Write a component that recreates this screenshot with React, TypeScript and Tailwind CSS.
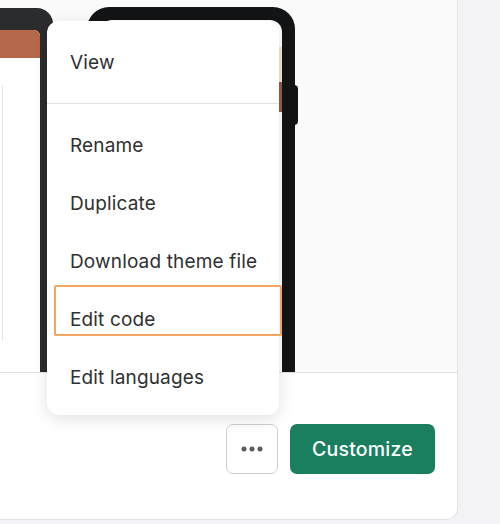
import { useState } from "react";

const items = ["Rename", "Duplicate", "Download theme file", "Edit code", "Edit languages"];

// preview mockups, drawn as a small illustration
const Phones = () => (
    <div className="relative h-full w-full overflow-hidden">
        <div className="absolute left-[-160px] top-[8px] flex h-[420px] w-[213px] flex-col rounded-tr-[16px] bg-[#2b2c2e] pt-[22px] pr-[13px]">
            <div className="flex-1 overflow-hidden rounded-tr-[6px] bg-white">
                <div className="h-[28px] bg-[#b5694a]" />
                <div className="ml-[162px] mt-[27px] h-[255px] w-px bg-[#e3e3e3]" />
            </div>
        </div>
        <div className="absolute left-[87px] top-[7px] flex h-[420px] w-[208px] flex-col rounded-t-[22px] bg-[#131415] px-[13px] pt-[13px]">
            <div className="flex flex-1 justify-end overflow-hidden rounded-t-[12px] bg-white">
                <div className="mt-[27px] flex w-[3px] flex-col">
                    <div className="h-[35px] bg-[#efe6cf]" />
                    <div className="h-[30px] bg-[#9a5c43]" />
                </div>
            </div>
            <div className="absolute right-[-3px] top-[78px] h-[40px] w-[4px] rounded-r-sm bg-[#131415]" />
        </div>
    </div>
);

export default function App() {
    const [active] = useState("Edit code");

    return (
        <div className="relative h-[524px] w-[500px] bg-[#f3f3f6] font-['Inter','Noto_Sans',sans-serif] text-[#303030]">
            <div className="flex h-[520px] w-[458px] flex-col overflow-hidden rounded-br-[12px] border-r border-b border-[#e3e3e6] bg-white">
                <div className="h-[373px] border-b border-[#e1e1e1] bg-[#fafafa]">
                    <Phones />
                </div>
                <div className="flex justify-end gap-3 pr-[22px] pt-[51px]">
                    <button className="flex h-[50px] w-[52px] items-center justify-center rounded-[7px] border border-[#cfcfcf] bg-white">
                        <svg width="22" height="6" viewBox="0 0 22 6" fill="#5a5a5a">
                            <circle cx="3" cy="3" r="2.5" />
                            <circle cx="11" cy="3" r="2.5" />
                            <circle cx="19" cy="3" r="2.5" />
                        </svg>
                    </button>
                    <button className="h-[50px] w-[145px] rounded-[7px] bg-[#1a7f5e] pt-[2px] text-[19.5px] font-medium tracking-[0.2px] text-white">
                        Customize
                    </button>
                </div>
            </div>

            {/* dropdown menu */}
            <div className="absolute left-[47px] top-[21px] w-[232px] rounded-[12px] bg-white shadow-[0_4px_16px_rgba(0,0,0,0.12)]">
                <div className="py-3">
                    <div className="flex h-[58px] items-center whitespace-nowrap pl-[23px] pt-[2px] text-[19px] tracking-[0.15px]">View</div>
                </div>
                <div className="h-px bg-[#e3e3e3]" />
                <div className="flex flex-col pt-3 pb-[9px]">
                    {items.map((item) => (
                        <div key={item} className="flex h-[58px] items-center whitespace-nowrap pl-[23px] pt-[2px] text-[19px] tracking-[0.15px]">
                            {item}
                        </div>
                    ))}
                </div>
                {active && (
                    <div className="absolute left-[7px] top-[264px] h-[51px] w-[228px] rounded-[2px] border-2 border-[#f5a561]" />
                )}
            </div>
        </div>
    );
}
